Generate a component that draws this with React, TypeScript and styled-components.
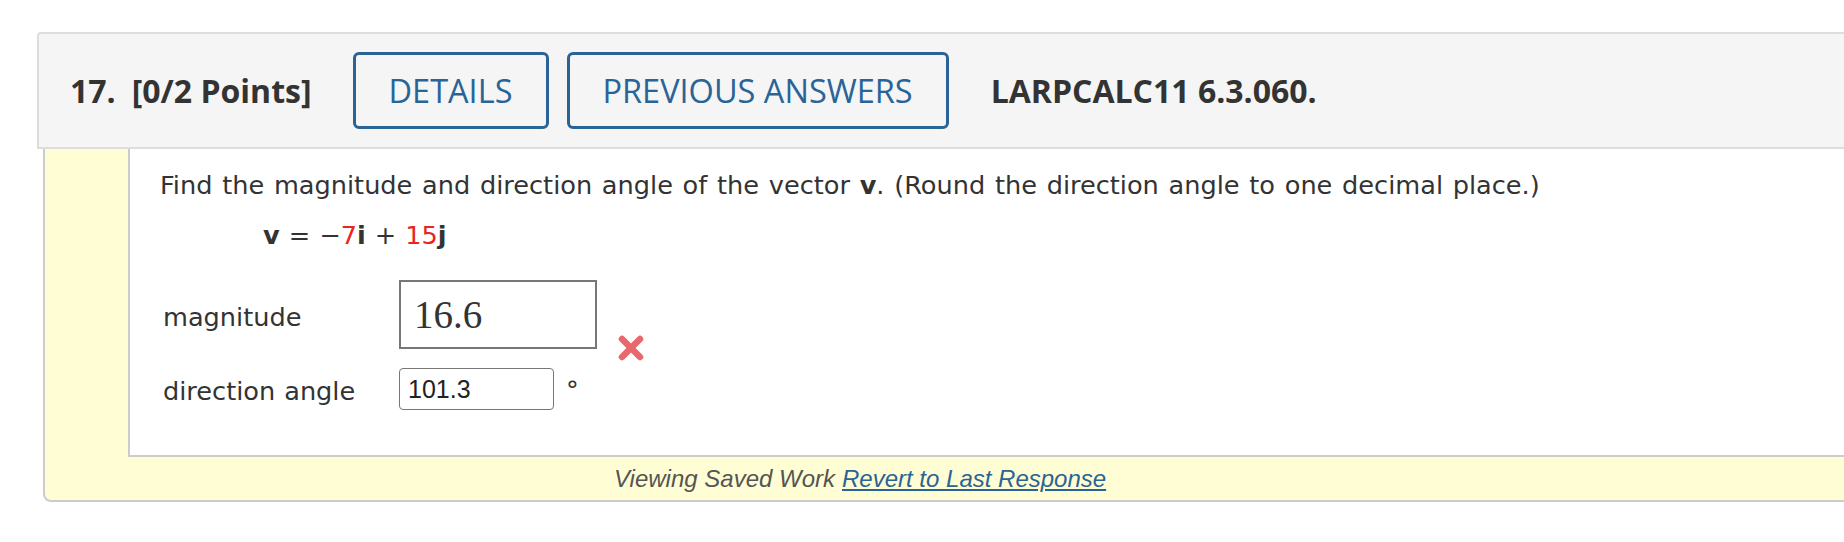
import React from "react";
import styled, { createGlobalStyle } from "styled-components";

const Global = createGlobalStyle`
  html, body { margin: 0; padding: 0; background: #ffffff; overflow: hidden; }
  body { width: 1844px; height: 542px; }
`;

const Page = styled.div`
  padding: 32px 0 0 37px;
  width: 1900px;
`;

const Header = styled.div`
  display: flex;
  align-items: center;
  height: 113px;
  box-sizing: content-box;
  background: #f5f5f5;
  border: 2px solid #dddddd;
  border-right: none;
  border-radius: 4px 0 0 0;
  padding-left: 31px;
  font-family: "Open Sans", "Liberation Sans", sans-serif;
  color: #333333;
`;

const Number = styled.span`
  font-size: 32px;
  font-weight: 700;
  margin-right: 16px;
`;

const Points = styled.span`
  font-size: 32px;
  font-weight: 700;
  margin-right: 41px;
`;

const Button = styled.button<{ $gap: number }>`
  height: 77px;
  padding: 0 33px;
  margin-right: ${(p) => p.$gap}px;
  background: transparent;
  border: 3.5px solid #2a6496;
  border-radius: 6px;
  color: #2a6496;
  font-family: "Open Sans", "Liberation Sans", sans-serif;
  font-size: 32.5px;
  font-weight: 500;
  cursor: pointer;
`;

const Ref = styled.span`
  font-size: 32px;
  font-weight: 700;
`;

const Body = styled.div`
  margin-left: 6px;
  background: #fffdd3;
  border-left: 2px solid #cccccc;
  border-bottom: 2px solid #cccccc;
  border-radius: 0 0 0 8px;
  padding-left: 83px;
`;

const Work = styled.div`
  background: #ffffff;
  border-left: 2px solid #cccccc;
  border-bottom: 2px solid #cccccc;
  padding: 21px 0 45px 30px;
  font-family: "DejaVu Sans", Verdana, sans-serif;
  font-size: 25.6px;
  word-spacing: 0.9px;
  color: #333333;
`;

const Prompt = styled.div`
  line-height: 30px;
  word-spacing: 1.6px;
`;

const Equation = styled.div`
  padding-left: 103px;
  margin-top: 20px;
  line-height: 30px;
`;

const Bold = styled.b`
  font-weight: 700;
`;

const Red = styled.span`
  color: #e8261b;
`;

const Form = styled.div`
  display: grid;
  grid-template-columns: 216px auto auto;
  grid-template-rows: auto auto;
  column-gap: 20px;
  row-gap: 19px;
  align-items: center;
  margin-top: 30px;
  margin-left: 3px;
  width: max-content;
`;

const Label = styled.div`
  grid-column: 1;
  padding-top: 4px;
`;

const BigInput = styled.div`
  grid-column: 2;
  box-sizing: border-box;
  width: 198px;
  height: 69px;
  border: 2px solid #777777;
  display: flex;
  align-items: center;
  padding-left: 13px;
  font-family: "Liberation Serif", "Times New Roman", serif;
  font-size: 39px;
  color: #333333;
`;

const AngleCell = styled.div`
  grid-column: 2;
  display: flex;
  align-items: flex-start;
`;

const SmallInput = styled.div`
  box-sizing: border-box;
  width: 155px;
  height: 42px;
  border: 1.5px solid #777777;
  border-radius: 4px;
  padding-left: 8px;
  display: flex;
  align-items: center;
  font-family: "Liberation Sans", Arial, sans-serif;
  font-size: 25px;
  color: #222222;
`;

const Degree = styled.span`
  margin-left: 12px;
  font-size: 25.6px;
  line-height: 26px;
  margin-top: 9px;
`;

const Mark = styled.div`
  grid-column: 3;
  grid-row: 1 / span 2;
  display: flex;
  align-items: center;
  padding-top: 6px;
`;

const Footer = styled.div`
  height: 43px;
  display: flex;
  align-items: center;
  padding-left: 486px;
  font-family: "Liberation Sans", Arial, sans-serif;
  font-style: italic;
  font-size: 24px;
  color: #555555;
`;

const Link = styled.a`
  color: #2a6496;
  text-decoration: underline;
  margin-left: 7px;
  cursor: pointer;
`;

const WrongIcon = () => (
  <svg width="28" height="28" viewBox="0 0 28 28">
    <g stroke="#e6585c" strokeWidth="6.5" strokeLinecap="round" opacity="0.9">
      <line x1="5" y1="5" x2="23" y2="23" />
      <line x1="23" y1="5" x2="5" y2="23" />
    </g>
  </svg>
);

export default function App() {
  return (
    <>
      <Global />
      <Page>
        <Header>
          <Number>17.</Number>
          <Points>[0/2 Points]</Points>
          <Button $gap={18}>DETAILS</Button>
          <Button $gap={42}>PREVIOUS ANSWERS</Button>
          <Ref>LARPCALC11 6.3.060.</Ref>
        </Header>
        <Body>
          <Work>
            <Prompt>
              Find the magnitude and direction angle of the vector <Bold>v</Bold>. (Round the direction angle to one decimal place.)
            </Prompt>
            <Equation>
              <Bold>v</Bold> = −<Red>7</Red><Bold>i</Bold> + <Red>15</Red><Bold>j</Bold>
            </Equation>
            <Form>
              <Label>magnitude</Label>
              <BigInput>16.6</BigInput>
              <Mark>
                <WrongIcon />
              </Mark>
              <Label>direction angle</Label>
              <AngleCell>
                <SmallInput>101.3</SmallInput>
                <Degree>°</Degree>
              </AngleCell>
            </Form>
          </Work>
          <Footer>
            Viewing Saved Work<Link>Revert to Last Response</Link>
          </Footer>
        </Body>
      </Page>
    </>
  );
}
